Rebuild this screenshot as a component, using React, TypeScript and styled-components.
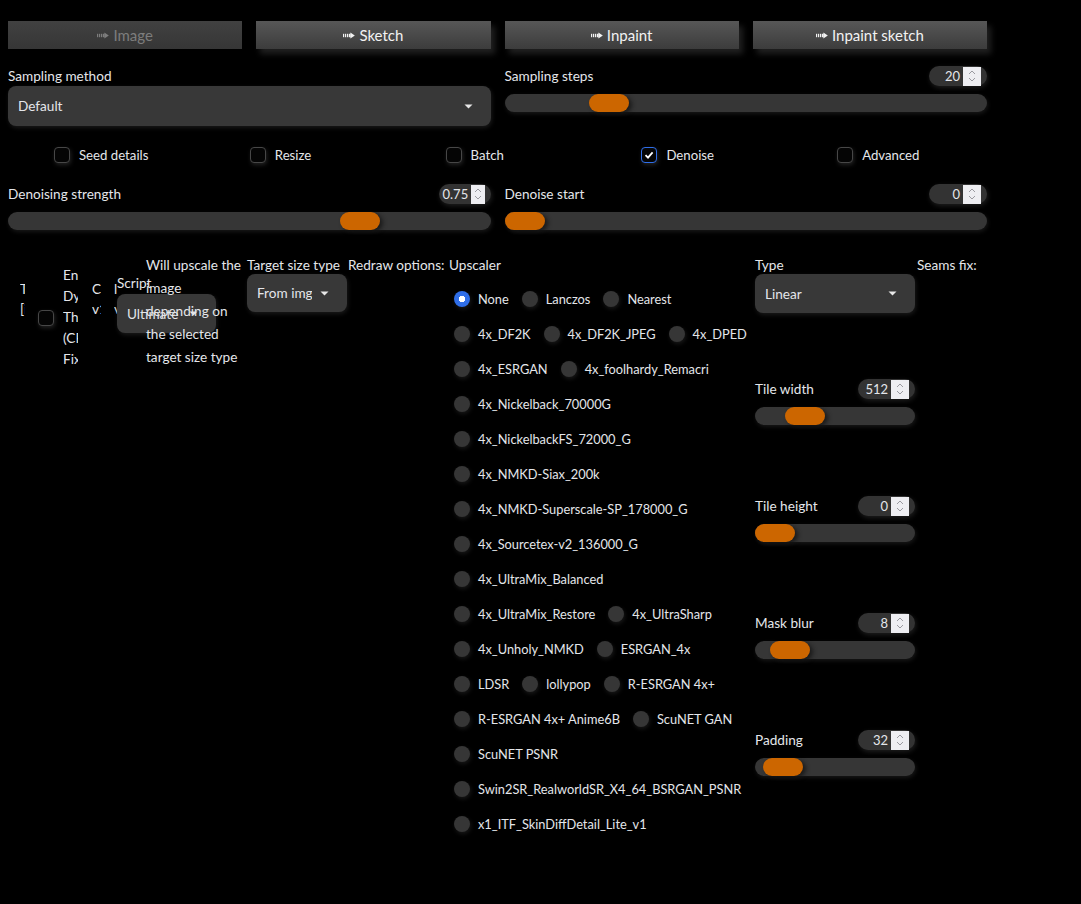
import styled, { createGlobalStyle } from "styled-components";

const GlobalStyle = createGlobalStyle`
  html, body {
    margin: 0;
    background: #000000;
  }
  body {
    font-family: "Lato", "Noto Sans", sans-serif;
    font-size: 13.2px;
    color: #e4e6ea;
  }
  * {
    box-sizing: border-box;
  }
`;

const upscalerRows: string[][] = [
  ["None", "Lanczos", "Nearest"],
  ["4x_DF2K", "4x_DF2K_JPEG", "4x_DPED"],
  ["4x_ESRGAN", "4x_foolhardy_Remacri"],
  ["4x_Nickelback_70000G"],
  ["4x_NickelbackFS_72000_G"],
  ["4x_NMKD-Siax_200k"],
  ["4x_NMKD-Superscale-SP_178000_G"],
  ["4x_Sourcetex-v2_136000_G"],
  ["4x_UltraMix_Balanced"],
  ["4x_UltraMix_Restore", "4x_UltraSharp"],
  ["4x_Unholy_NMKD", "ESRGAN_4x"],
  ["LDSR", "lollypop", "R-ESRGAN 4x+"],
  ["R-ESRGAN 4x+ Anime6B", "ScuNET GAN"],
  ["ScuNET PSNR"],
  ["Swin2SR_RealworldSR_X4_64_BSRGAN_PSNR"],
  ["x1_ITF_SkinDiffDetail_Lite_v1"],
];

const Caret = () => (
  <svg width="9" height="5" viewBox="0 0 9 5">
    <path d="M0.5 0.5 L8.5 0.5 L4.5 4.5 Z" fill="#e8e8e8" />
  </svg>
);

// dashed triangle-headed arrow in front of the send buttons
const Arrow = () => (
  <svg width="12" height="7" viewBox="0 0 12 7">
    <rect x="0" y="1.8" width="1" height="3.4" fill="currentColor" />
    <rect x="1.8" y="1.8" width="1.2" height="3.4" fill="currentColor" />
    <rect x="3.8" y="1.8" width="1.5" height="3.4" fill="currentColor" />
    <rect x="6" y="1.8" width="1.6" height="3.4" fill="currentColor" />
    <path d="M7.4 0.4 L11.8 3.5 L7.4 6.6 Z" fill="currentColor" />
  </svg>
);

interface NumberBoxProps {
  value: string;
  width?: number;
}

const NumberBox = ({ value, width = 58 }: NumberBoxProps) => (
  <NumberLayout $width={width}>
    <span className="value">{value}</span>
    <span className="spin">
      <svg width="10" height="16" viewBox="0 0 10 16">
        <path d="M2 6 L5 3 L8 6" stroke="#9a9aa0" strokeWidth="1" fill="none" />
        <path d="M2 10 L5 13 L8 10" stroke="#9a9aa0" strokeWidth="1" fill="none" />
      </svg>
    </span>
  </NumberLayout>
);

interface SliderProps {
  label: string;
  value: string;
  min: number;
  max: number;
  boxWidth?: number;
}

const Slider = ({ label, value, min, max, boxWidth }: SliderProps) => {
  const fraction = (parseFloat(value) - min) / (max - min);
  return (
    <SliderLayout>
      <FieldHeader>
        <span>{label}</span>
        <NumberBox value={value} width={boxWidth} />
      </FieldHeader>
      <Track>
        <Thumb style={{ left: `calc((100% - 40px) * ${fraction})` }} />
      </Track>
    </SliderLayout>
  );
};

interface CheckProps {
  label: string;
  checked?: boolean;
}

const Check = ({ label, checked }: CheckProps) => (
  <CheckItem>
    <CheckBox $checked={checked}>
      {checked && (
        <svg width="10" height="10" viewBox="0 0 10 10">
          <path
            d="M1.5 5.2 L4 7.6 L8.6 2.4"
            stroke="#ffffff"
            strokeWidth="1.8"
            fill="none"
          />
        </svg>
      )}
    </CheckBox>
    <span>{label}</span>
  </CheckItem>
);

export default function App() {
  return (
    <>
      <GlobalStyle />
      <Page>
        <Top>
          <SendRow>
            <SendButton $disabled>
              <Arrow /> Image
            </SendButton>
            <SendButton>
              <Arrow /> Sketch
            </SendButton>
            <SendButton>
              <Arrow /> Inpaint
            </SendButton>
            <SendButton>
              <Arrow /> Inpaint sketch
            </SendButton>
          </SendRow>

          <TwoCols>
            <div>
              <FieldHeader>
                <span>Sampling method</span>
              </FieldHeader>
              <Select $height={40}>
                <span className="text">Default</span>
                <Caret />
              </Select>
            </div>
            <Slider label="Sampling steps" value="20" min={1} max={100} />
          </TwoCols>

          <CheckRow>
            <Check label="Seed details" />
            <Check label="Resize" />
            <Check label="Batch" />
            <Check label="Denoise" checked />
            <Check label="Advanced" />
          </CheckRow>

          <TwoCols>
            <Slider
              label="Denoising strength"
              value="0.75"
              min={0}
              max={1}
              boxWidth={52}
            />
            <Slider label="Denoise start" value="0" min={0} max={1} />
          </TwoCols>
        </Top>

        <Lower>
          <ClipText $left={12} $width={5} $top={22}>
            Toggle
            <br />
            [info]
          </ClipText>

          <ThresholdGroup>
            <CheckBox />
            <div className="words">
              Enable Dynamic Thresholding (CFG Fix)
            </div>
          </ThresholdGroup>

          <ClipText $left={14} $width={9} $top={22}>
            CFG
            <br />
            v1
          </ClipText>

          <ClipText $left={13} $width={3} $top={22}>
            l
            <br />v
          </ClipText>

          <ScriptGroup>
            <Label>Script</Label>
            <Select $height={39} $width={99}>
              <span className="text">Ultimate SD upscale</span>
              <Caret />
            </Select>
          </ScriptGroup>

          <Description>
            Will upscale the image depending on the selected target size type
          </Description>

          <Column $left={5} $width={100}>
            <Label>Target size type</Label>
            <Select $height={38} $width={100}>
              <span className="text">From img2img2 settings</span>
              <Caret />
            </Select>
          </Column>

          <Column $left={1} $width={101}>
            <Label>Redraw options:</Label>
          </Column>

          <Column $left={0} $width={306}>
            <Label>Upscaler</Label>
            <RadioList>
              {upscalerRows.map((row) => (
                <RadioRow key={row[0]}>
                  {row.map((name) => (
                    <RadioItem key={name}>
                      <RadioDot $checked={name === "None"} />
                      <span>{name}</span>
                    </RadioItem>
                  ))}
                </RadioRow>
              ))}
            </RadioList>
          </Column>

          <Column $left={0} $width={160}>
            <Label>Type</Label>
            <Select $height={39}>
              <span className="text">Linear</span>
              <Caret />
            </Select>
            <TileStack>
              <Slider label="Tile width" value="512" min={0} max={2048} boxWidth={57} />
              <Slider label="Tile height" value="0" min={0} max={2048} boxWidth={57} />
              <Slider label="Mask blur" value="8" min={0} max={64} boxWidth={57} />
              <Slider label="Padding" value="32" min={0} max={512} boxWidth={57} />
            </TileStack>
          </Column>

          <Column $left={2} $width={100}>
            <Label>Seams fix:</Label>
          </Column>
        </Lower>
      </Page>
    </>
  );
}

const Page = styled.div`
  padding: 21px 0 40px 8px;
`;

const Top = styled.div`
  width: 979px;
  display: flex;
  flex-direction: column;
`;

const SendRow = styled.div`
  display: grid;
  grid-template-columns: repeat(4, 1fr);
  gap: 14px;
  margin-bottom: 17px;
`;

const SendButton = styled.div<{ $disabled?: boolean }>`
  height: 28px;
  display: flex;
  align-items: center;
  justify-content: center;
  gap: 4px;
  font-size: 15px;
  color: ${(p) => (p.$disabled ? "#7d7d7d" : "#f2f2f2")};
  background: ${(p) =>
    p.$disabled
      ? "linear-gradient(180deg, #414141, #363636)"
      : "linear-gradient(180deg, #575757, #3c3c3c)"};
  box-shadow: ${(p) =>
    p.$disabled ? "none" : "4px 5px 6px rgba(70, 70, 70, 0.45)"};

  & > svg {
    margin-top: 1px;
  }
`;

const TwoCols = styled.div`
  display: grid;
  grid-template-columns: 1fr 1fr;
  gap: 14px;
`;

const FieldHeader = styled.div`
  height: 20px;
  display: flex;
  align-items: center;
  justify-content: space-between;
  line-height: 20px;
  font-size: 13.6px;
`;

const Select = styled.div<{ $height: number; $width?: number }>`
  height: ${(p) => p.$height}px;
  width: ${(p) => (p.$width ? `${p.$width}px` : "auto")};
  flex-shrink: 0;
  display: flex;
  align-items: center;
  gap: 8px;
  padding: 0 18px 0 10px;
  background: #383838;
  border-radius: 8px;
  box-shadow: 1px 2px 4px rgba(50, 50, 50, 0.5);
  font-size: 13.6px;

  & > .text {
    flex: 1;
    min-width: 0;
    overflow: hidden;
    white-space: nowrap;
    text-overflow: clip;
  }
`;

const SliderLayout = styled.div`
  display: flex;
  flex-direction: column;
  gap: 8px;
`;

const NumberLayout = styled.div<{ $width: number }>`
  width: ${(p) => p.$width}px;
  height: 20px;
  display: flex;
  align-items: center;
  justify-content: flex-end;
  gap: 3px;
  padding: 0 6px 0 4px;
  background: #333333;
  border-radius: 10px;
  box-shadow: 1px 2px 5px rgba(55, 55, 55, 0.55);
  font-size: 13px;

  & > .spin {
    width: 18px;
    height: 19px;
    background: #eeeef2;
    display: flex;
    align-items: center;
    justify-content: center;
  }
`;

const Track = styled.div`
  position: relative;
  height: 18px;
  border-radius: 9px;
  background: #363636;
  box-shadow: 1px 2px 4px rgba(45, 45, 45, 0.5);
`;

const Thumb = styled.div`
  position: absolute;
  top: 0;
  width: 40px;
  height: 18px;
  border-radius: 9px;
  background: #cc6600;
  box-shadow: 3px 2px 4px rgba(20, 20, 20, 0.8);
`;

const CheckRow = styled.div`
  display: grid;
  grid-template-columns: repeat(5, 1fr);
  margin: 21px 0;
  height: 16px;
`;

const CheckItem = styled.div`
  display: flex;
  align-items: center;
  gap: 9px;
  padding-left: 46px;
  line-height: 16px;
`;

const CheckBox = styled.div<{ $checked?: boolean }>`
  width: 16px;
  height: 16px;
  flex-shrink: 0;
  border-radius: 4px;
  border: 1px solid ${(p) => (p.$checked ? "#2f6ee8" : "#474747")};
  background: #050505;
  box-shadow: 1px 2px 4px rgba(60, 60, 60, 0.55);
  display: flex;
  align-items: center;
  justify-content: center;
`;

const Lower = styled.div`
  display: flex;
  align-items: flex-start;
  margin-top: 27px;
`;

const Label = styled.div`
  height: 17px;
  line-height: 17px;
  white-space: nowrap;
  font-size: 13.6px;
`;

const ClipText = styled.div<{ $left: number; $width: number; $top: number }>`
  margin-left: ${(p) => p.$left}px;
  margin-top: ${(p) => p.$top}px;
  width: ${(p) => p.$width}px;
  flex-shrink: 0;
  overflow: hidden;
  white-space: nowrap;
  line-height: 20px;
  font-size: 13.6px;
`;

const ThresholdGroup = styled.div`
  margin-left: 13px;
  margin-top: 8px;
  display: flex;
  align-items: center;
  gap: 9px;
  flex-shrink: 0;
  font-size: 13.6px;

  & > .words {
    width: 15px;
    overflow: hidden;
    line-height: 21px;
  }
`;

const ScriptGroup = styled.div`
  width: 29px;
  flex-shrink: 0;
  margin-top: 18px;
  display: flex;
  flex-direction: column;
  align-items: flex-start;
  gap: 2px;
`;

const Description = styled.div`
  width: 96px;
  flex-shrink: 0;
  margin-top: -3px;
  line-height: 23px;
  font-size: 13.6px;
  position: relative;
`;

const Column = styled.div<{ $left: number; $width: number }>`
  margin-left: ${(p) => p.$left}px;
  width: ${(p) => p.$width}px;
  flex-shrink: 0;
  display: flex;
  flex-direction: column;
`;

const RadioList = styled.div`
  margin-top: 7px;
  display: flex;
  flex-direction: column;
`;

const RadioRow = styled.div`
  height: 35px;
  display: flex;
  align-items: center;
  gap: 13px;
  padding-left: 5px;
  font-size: 12.8px;
`;

const RadioItem = styled.div`
  display: flex;
  align-items: center;
  gap: 8px;
  white-space: nowrap;
`;

const RadioDot = styled.span<{ $checked?: boolean }>`
  width: 16px;
  height: 16px;
  border-radius: 50%;
  flex-shrink: 0;
  background: ${(p) =>
    p.$checked
      ? "radial-gradient(circle, #ffffff 0 3px, #2f6ee8 3.5px)"
      : "#363636"};
  box-shadow: 1px 2px 4px rgba(40, 40, 40, 0.6);
`;

const TileStack = styled.div`
  margin-top: 66px;
  display: flex;
  flex-direction: column;
  gap: 71px;
`;
